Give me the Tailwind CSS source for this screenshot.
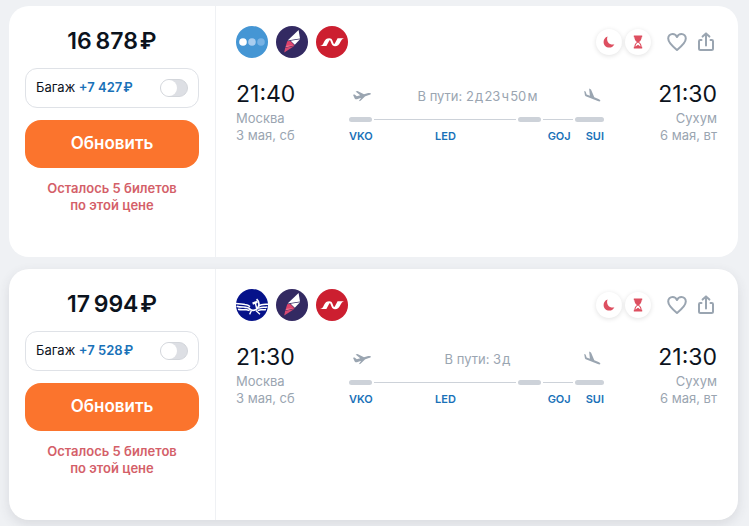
<!DOCTYPE html>
<html lang="ru">
<head>
    <meta charset="UTF-8">
    <meta name="viewport" content="width=device-width, initial-scale=1.0">
    <script src="https://cdn.jsdelivr.net/npm/@tailwindcss/browser@4"></script>
    <title>Билеты Москва — Сухум</title>
</head>
<body class="bg-[#eff1f4] font-['Inter','Noto_Sans',sans-serif] text-[#0c131d]">
    <!-- иконки -->
    <svg class="hidden">
        <symbol id="pobeda" viewBox="0 0 32 32">
            <circle cx="16" cy="16" r="16" fill="#4596d4"/>
            <circle cx="7" cy="16" r="3.8" fill="#fff"/>
            <circle cx="16" cy="16" r="3.8" fill="#a9cdef"/>
            <circle cx="25" cy="16" r="3.8" fill="#78b2e4"/>
        </symbol>
        <symbol id="aeroflot" viewBox="0 0 32 32">
            <circle cx="16" cy="16" r="16" fill="#06128a"/>
            <g fill="none" stroke="#fff">
                <path d="M0 14.6c3 .6 6 .4 9 .8 2.200.2 3.600.8 5 2.200M.6 17.200c3 1 6 .8 8.800 1 2 .2 3 .4 4.600 1.400M2 20.200c2.600.8 5 .4 7.400.4l4.200.8M32 15.200c-2.400.2-4.400.2-6.600.6-1.200.2-2 .6-3 1.400M31.400 18c-2.400.4-4.400.2-6.200.4-1.200.2-2 .4-3 1M30 20.600c-2 .4-3.600.2-5 .2l-3.400.6" stroke-width="1.500"/>
                <path d="M20.600 10.200c3 2.600 3.200 7 .4 9.600-2.600 2.200-6 2-8-.4" stroke-width="1.700"/>
                <path d="m16.600 14.600 4.800-1.800" stroke-width="2.400"/>
                <path d="m19.200 13.600 1.600 6.200" stroke-width="1.500"/>
                <path d="m15.400 21.600-1.800 3.800M19.800 21.600l4.200 3.600" stroke-width="1.300"/>
            </g>
        </symbol>
        <symbol id="redwings" viewBox="0 0 32 32">
            <circle cx="16" cy="16" r="16" fill="#332a62"/>
            <path d="M22.600 4 11.600 14.600 24 12.400z" fill="#fff"/>
            <path d="m24 13.200-9.400 1.600 4.200 4z" fill="#fff"/>
            <path d="m11.200 15.200 3-.2 4.400 4.400-9.200 1.800z" fill="#e0446c"/>
            <path d="m9.200 21.800 9.200-1.800L8.200 26.600z" fill="#d84a72"/>
            <path d="m11 19.800 7.200-.6-8.800 2z" fill="#f0829a"/>
        </symbol>
        <symbol id="nordwind" viewBox="0 0 32 32">
            <circle cx="16" cy="16" r="16" fill="#cc1f30"/>
            <path d="M4 20c2.400-.4 3-1.800 4-4 1.400-2.800 2.800-3.800 5.200-3.800 1.800 0 2.600.8 3.200 2.400l1.200 3c.2.600.8.600 1.200 0l2.800-5.400h6.400c-1.600.6-2.600 1.800-3.600 3.800-1.600 3-2.800 4.200-5.400 4.200-1.800 0-2.800-.8-3.400-2.400l-1.200-3c-.2-.6-.8-.6-1.200 0L10.400 20z" fill="#fff"/>
        </symbol>
        <symbol id="moon" viewBox="0 0 12 12">
            <path d="M4.600.4C2 1.200.6 3.400.6 6c0 3.200 2.400 5.600 5.600 5.600 2.400 0 4.400-1.400 5.200-3.400-1 .4-2 .4-3 .2C4.800 7.600 3.200 3.800 4.600.4z" fill="#dd4f60"/>
        </symbol>
        <symbol id="hourglass" viewBox="0 0 10 14">
            <path d="M.8.4h8.400v1.800h-.6c0 2.400-1 3.600-2.600 4.800 1.600 1.200 2.600 2.400 2.600 4.800h.6v1.800H.8v-1.800h.6C1.400 9.400 2.400 8.200 4 7 2.400 5.800 1.400 4.600 1.400 2.200H.8z" fill="#dd4f60"/>
            <path d="M5 7.600c-1.600 1-2.400 2-2.500 4l2.500-1.800 2.500 1.800c-.1-2-.9-3-2.500-4z" fill="#fff"/>
        </symbol>
        <symbol id="heart" viewBox="0 0 20 20">
            <path d="M10 18C7 15.600 1.200 11 1.200 6.600 1.200 3.800 3.200 2 5.600 2 7.600 2 9.200 3.200 10 5c.8-1.800 2.400-3 4.400-3 2.400 0 4.400 1.800 4.400 4.600C18.800 11 13 15.600 10 18z" fill="none" stroke="#9aa5b1" stroke-width="2" stroke-linejoin="round"/>
        </symbol>
        <symbol id="share" viewBox="0 0 20 20">
            <path d="M4.500 8H3.200Q2 8 2 9.200v7.300Q2 18 3.500 18h11q1.500 0 1.500-1.500V9.200Q16 8 14.800 8h-1.300M9 13.500V1.500M5.600 4.600 9 1.400l3.400 3.200" fill="none" stroke="#9aa5b1" stroke-width="2" stroke-linecap="round" stroke-linejoin="round"/>
        </symbol>
        <symbol id="takeoff" viewBox="0 0 20 12">
            <path d="m1 4.800 1.600-.4 2.200 1.800 3.400-.9L3.600 1.600l1.900-.5 6.500 3.100 4.200-1.100c1.400-.4 2.600-.2 2.700.3.100.6-.7 1.200-2 1.600L5 9.200c-1 .2-1.700 0-2.300-.8zM9.500 7.200l4-1.200-5 4.800-1.700.5z" fill="#9aa5b1"/>
        </symbol>
        <symbol id="landing" viewBox="0 0 18 16">
            <path d="m1.200 3 1.400.5 1 2.900 3.300 1.400L6.100.6l1.900.8 3.300 7.900 4.200 1.800c1.400.6 2 1.300 1.800 1.900-.3.600-1.300.6-2.500.1L3.400 8.400c-1-.4-1.500-1-1.600-2z" fill="#9aa5b1"/>
        </symbol>
    </svg>

    <main class="flex flex-col gap-3 py-1.5 pl-[9px] pr-[11px]">
        <!-- билет 1 -->
        <article class="flex rounded-[20px] bg-white">
            <div class="flex w-[207px] shrink-0 flex-col border-r border-[#eff1f4] px-4 pt-5 pb-[43px]">
                <p class="text-center text-[23px] leading-[30px] font-semibold">16&#8201;878&#8202;₽</p>
                <label class="mt-3 flex h-10 items-center rounded-xl border border-[#dfe2e7] px-2.5 text-[13px]">
                    <span>Багаж <span class="font-semibold text-[#1971b8]">+7&nbsp;427&#8202;₽</span></span>
                    <input type="checkbox" class="ml-auto h-[18px] w-7 appearance-none rounded-full border border-[#d3d6db] bg-[#dddfe4] before:block before:size-4 before:rounded-full before:bg-white checked:bg-[#1971b8] checked:before:ml-2.5">
                </label>
                <button class="mt-3 h-12 rounded-2xl bg-[#fb742d] text-[17px] font-semibold text-white">Обновить</button>
                <p class="mt-3 text-center text-[13px] leading-[17px] font-semibold text-[#d45f69]">Осталось 5 билетов<br>по этой цене</p>
            </div>
            <div class="flex-1 pt-5 pr-[21px] pl-5">
                <div class="flex items-center">
                    <div class="flex gap-2">
                        <svg class="size-8"><use href="#pobeda"/></svg>
                        <svg class="size-8"><use href="#redwings"/></svg>
                        <svg class="size-8"><use href="#nordwind"/></svg>
                    </div>
                    <div class="ml-auto flex gap-[3px]">
                        <span class="flex size-[26px] items-center justify-center rounded-full bg-white shadow-[0_1px_5px_rgba(0,0,0,0.12)]"><svg class="size-3"><use href="#moon"/></svg></span>
                        <span class="flex size-[26px] items-center justify-center rounded-full bg-white shadow-[0_1px_5px_rgba(0,0,0,0.12)]"><svg class="h-3.5 w-2.5"><use href="#hourglass"/></svg></span>
                    </div>
                    <button class="ml-4" aria-label="В избранное"><svg class="size-5"><use href="#heart"/></svg></button>
                    <button class="ml-2.5" aria-label="Поделиться"><svg class="size-5"><use href="#share"/></svg></button>
                </div>
                <div class="mt-5 grid grid-cols-[60px_1fr_60px] gap-[53px] text-[13px] leading-[17px] whitespace-nowrap text-[#9aa5b1]">
                    <div>
                        <p class="text-[23px] leading-8 text-[#0c131d]">21:40</p>
                        <p>Москва</p>
                        <p>3 мая, сб</p>
                    </div>
                    <div class="pt-1">
                        <div class="flex h-7 items-center justify-between px-[3px]">
                            <svg class="h-3 w-5"><use href="#takeoff"/></svg>
                            <span>В пути: 2&#8202;д&#8202;23&#8202;ч&#8202;50&#8202;м</span>
                            <svg class="h-4 w-[18px]"><use href="#landing"/></svg>
                        </div>
                        <div class="mt-[7px] flex items-center gap-0.5">
                            <i class="h-[5px] w-[23px] rounded-full bg-[#cdd2d9]"></i>
                            <i class="h-px flex-1 bg-[#cdd2d9]"></i>
                            <i class="h-[5px] w-[23px] rounded-full bg-[#cdd2d9]"></i>
                            <i class="h-px w-[30px] bg-[#cdd2d9]"></i>
                            <i class="h-[5px] w-[29px] rounded-full bg-[#cdd2d9]"></i>
                        </div>
                        <div class="mt-1.5 flex text-[11px] leading-4 font-semibold text-[#1971b8]">
                            <span class="w-[86px]">VKO</span>
                            <span>LED</span>
                            <span class="ml-auto">GOJ</span>
                            <span class="ml-[15px]">SUI</span>
                        </div>
                    </div>
                    <div class="flex flex-col items-end">
                        <p class="text-[23px] leading-8 text-[#0c131d]">21:30</p>
                        <p>Сухум</p>
                        <p>6 мая, вт</p>
                    </div>
                </div>
            </div>
        </article>

        <!-- билет 2 -->
        <article class="flex rounded-[20px] bg-white shadow-[0_4px_12px_rgba(60,60,70,0.12)]">
            <div class="flex w-[207px] shrink-0 flex-col border-r border-[#eff1f4] px-4 pt-5 pb-[43px]">
                <p class="text-center text-[23px] leading-[30px] font-semibold">17&#8201;994&#8202;₽</p>
                <label class="mt-3 flex h-10 items-center rounded-xl border border-[#dfe2e7] px-2.5 text-[13px]">
                    <span>Багаж <span class="font-semibold text-[#1971b8]">+7&nbsp;528&#8202;₽</span></span>
                    <input type="checkbox" class="ml-auto h-[18px] w-7 appearance-none rounded-full border border-[#d3d6db] bg-[#dddfe4] before:block before:size-4 before:rounded-full before:bg-white checked:bg-[#1971b8] checked:before:ml-2.5">
                </label>
                <button class="mt-3 h-12 rounded-2xl bg-[#fb742d] text-[17px] font-semibold text-white">Обновить</button>
                <p class="mt-3 text-center text-[13px] leading-[17px] font-semibold text-[#d45f69]">Осталось 5 билетов<br>по этой цене</p>
            </div>
            <div class="flex-1 pt-5 pr-[21px] pl-5">
                <div class="flex items-center">
                    <div class="flex gap-2">
                        <svg class="size-8"><use href="#aeroflot"/></svg>
                        <svg class="size-8"><use href="#redwings"/></svg>
                        <svg class="size-8"><use href="#nordwind"/></svg>
                    </div>
                    <div class="ml-auto flex gap-[3px]">
                        <span class="flex size-[26px] items-center justify-center rounded-full bg-white shadow-[0_1px_5px_rgba(0,0,0,0.12)]"><svg class="size-3"><use href="#moon"/></svg></span>
                        <span class="flex size-[26px] items-center justify-center rounded-full bg-white shadow-[0_1px_5px_rgba(0,0,0,0.12)]"><svg class="h-3.5 w-2.5"><use href="#hourglass"/></svg></span>
                    </div>
                    <button class="ml-4" aria-label="В избранное"><svg class="size-5"><use href="#heart"/></svg></button>
                    <button class="ml-2.5" aria-label="Поделиться"><svg class="size-5"><use href="#share"/></svg></button>
                </div>
                <div class="mt-5 grid grid-cols-[60px_1fr_60px] gap-[53px] text-[13px] leading-[17px] whitespace-nowrap text-[#9aa5b1]">
                    <div>
                        <p class="text-[23px] leading-8 text-[#0c131d]">21:30</p>
                        <p>Москва</p>
                        <p>3 мая, сб</p>
                    </div>
                    <div class="pt-1">
                        <div class="flex h-7 items-center justify-between px-[3px]">
                            <svg class="h-3 w-5"><use href="#takeoff"/></svg>
                            <span>В пути: 3&#8202;д</span>
                            <svg class="h-4 w-[18px]"><use href="#landing"/></svg>
                        </div>
                        <div class="mt-[7px] flex items-center gap-0.5">
                            <i class="h-[5px] w-[23px] rounded-full bg-[#cdd2d9]"></i>
                            <i class="h-px flex-1 bg-[#cdd2d9]"></i>
                            <i class="h-[5px] w-[23px] rounded-full bg-[#cdd2d9]"></i>
                            <i class="h-px w-[30px] bg-[#cdd2d9]"></i>
                            <i class="h-[5px] w-[29px] rounded-full bg-[#cdd2d9]"></i>
                        </div>
                        <div class="mt-1.5 flex text-[11px] leading-4 font-semibold text-[#1971b8]">
                            <span class="w-[86px]">VKO</span>
                            <span>LED</span>
                            <span class="ml-auto">GOJ</span>
                            <span class="ml-[15px]">SUI</span>
                        </div>
                    </div>
                    <div class="flex flex-col items-end">
                        <p class="text-[23px] leading-8 text-[#0c131d]">21:30</p>
                        <p>Сухум</p>
                        <p>6 мая, вт</p>
                    </div>
                </div>
            </div>
        </article>
    </main>
</body>
</html>
